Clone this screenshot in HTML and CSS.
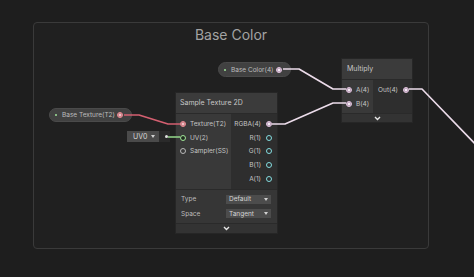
FILE: index.html
```html
<!DOCTYPE html>
<html>
<head>
<meta charset="utf-8">
<link rel="stylesheet" href="styles.css">
</head>
<body>
<div class="canvas">
  <div class="group"><div class="group-title">Base Color</div></div>

  <div class="prop prop-color">
    <span class="gdot"></span><span class="plabel">Base Color(4)</span><span class="port vec on"></span>
  </div>

  <div class="prop prop-tex">
    <span class="gdot"></span><span class="plabel">Base Texture(T2)</span><span class="port tex on"></span>
  </div>

  <div class="uvsel">
    <span class="dd">UV0<i class="tri"></i></span><span class="sdot"></span>
  </div>

  <div class="node sample">
    <div class="nhead">Sample Texture 2D</div>
    <div class="nbody">
      <div class="ins">
        <div class="row"><span class="port tex on"></span><span>Texture(T2)</span></div>
        <div class="row"><span class="port uv on"></span><span>UV(2)</span></div>
        <div class="row"><span class="port ss"></span><span>Sampler(SS)</span></div>
      </div>
      <div class="outs">
        <div class="row"><span>RGBA(4)</span><span class="port vec on"></span></div>
        <div class="row"><span>R(1)</span><span class="port f1"></span></div>
        <div class="row"><span>G(1)</span><span class="port f1"></span></div>
        <div class="row"><span>B(1)</span><span class="port f1"></span></div>
        <div class="row"><span>A(1)</span><span class="port f1"></span></div>
      </div>
    </div>
    <div class="nsettings">
      <div class="srow"><span>Type</span><span class="sdd">Default<i class="tri"></i></span></div>
      <div class="srow"><span>Space</span><span class="sdd">Tangent<i class="tri"></i></span></div>
    </div>
    <div class="ncollapse"><svg width="7" height="5" viewBox="0 0 7 5"><path d="M1 1 L3.5 3.5 L6 1" fill="none" stroke="#e6e6e6" stroke-width="1.4"/></svg></div>
  </div>

  <div class="node multiply">
    <div class="nhead">Multiply</div>
    <div class="nbody">
      <div class="ins">
        <div class="row"><span class="port vec on"></span><span>A(4)</span></div>
        <div class="row"><span class="port vec on"></span><span>B(4)</span></div>
      </div>
      <div class="outs">
        <div class="row"><span>Out(4)</span><span class="port vec on"></span></div>
      </div>
    </div>
    <div class="ncollapse"><svg width="7" height="5" viewBox="0 0 7 5"><path d="M1 1 L3.5 3.5 L6 1" fill="none" stroke="#e6e6e6" stroke-width="1.4"/></svg></div>
  </div>

  <svg class="edges" width="474" height="277" viewBox="0 0 474 277">
    <path d="M124 115 H139 L168 124 H180" stroke="#d45f70" />
    <path d="M283 69 H299 L333 89 H346" stroke="#ecdcea" />
    <path d="M272 124 H285 L333 103 H346" stroke="#ecdcea" />
    <path d="M409 89 H422 L482 151" stroke="#ecdcea" />
    <path d="M168 137 H180" stroke="#8fcf86" />
  </svg>
</div>
</body>
</html>
```

FILE: styles.css
```css
* { box-sizing: border-box; }
html, body {
  margin: 0;
  padding: 0;
  background: #1e1e1e;
}
body {
  font-family: Inter, "Noto Sans", "DejaVu Sans", sans-serif;
  color: #c4c4c4;
  font-size: 6.5px;
}
.canvas {
  position: relative;
  width: 474px;
  height: 277px;
  overflow: hidden;
  background: #1e1e1e;
}
.group {
  position: absolute;
  left: 33px;
  top: 22px;
  width: 396px;
  height: 227px;
  border: 1px solid #3a3a3a;
  border-radius: 4px;
  background: #202020;
}
.group-title {
  padding-top: 4px;
  line-height: 16px;
  font-size: 14px;
  text-align: center;
  color: #a3a3a3;
}

/* property pills */
.prop {
  position: absolute;
  display: flex;
  align-items: center;
  height: 15px;
  border-radius: 8px;
  background: #414141;
  border: 1px solid #4a4a4a;
  padding-left: 5px;
  color: #bdbdbd;
}
.prop-color { left: 218px; top: 62px; width: 73px; }
.prop-tex { left: 49px; top: 108px; width: 83px; height: 14px; }
.gdot {
  width: 2px;
  height: 2px;
  border-radius: 50%;
  background: #9fe39a;
  margin-right: 5px;
}
.plabel { flex: 1; white-space: nowrap; }
.prop .port { margin-right: 8px; }

/* uv selector */
.uvsel {
  position: absolute;
  left: 127px;
  top: 131px;
  width: 43px;
  height: 11px;
  display: flex;
  align-items: center;
  background: #2a2a2a;
}
.dd {
  display: flex;
  align-items: center;
  justify-content: space-between;
  width: 32px;
  height: 11px;
  padding: 0 4px 0 6px;
  background: #4a4a4a;
  color: #d6d6d6;
  font-size: 7px;
}
.sdot {
  width: 3px;
  height: 3px;
  margin-left: 6px;
  background: #e0e0e0;
  border-radius: 50%;
}
.tri {
  width: 0;
  height: 0;
  border-left: 2.5px solid transparent;
  border-right: 2.5px solid transparent;
  border-top: 3px solid #d0d0d0;
}

/* ports */
.port {
  width: 6px;
  height: 6px;
  border-radius: 50%;
  flex: none;
  border: 1px solid #aaa;
}
.port.vec { border-color: #e9cbe6; }
.port.vec.on { background: radial-gradient(circle, #f6eaf5 0 1.3px, #8f7390 1.8px); }
.port.tex { border-color: #f08e96; }
.port.tex.on { background: radial-gradient(circle, #f2c0c4 0 1.3px, #a45a62 1.8px); }
.port.uv { border-color: #9ee394; }
.port.uv.on { background: radial-gradient(circle, #1f2a1f 0 1.3px, #2a352a 1.8px); }
.port.ss { border-color: #b8b8b8; }
.port.f1 { border-color: #84dde0; }

/* nodes */
.node {
  position: absolute;
  background: #2e2e2e;
  box-shadow: 0 0 0 1px #262626;
}
.sample { left: 176px; top: 93px; width: 101px; }
.multiply { left: 342px; top: 59px; width: 70px; }
.nhead {
  height: 21px;
  line-height: 20px;
  padding-left: 4px;
  background: #3b3b3b;
  border-bottom: 1px solid #2a2a2a;
  color: #c8c8c8;
  font-size: 7px;
  white-space: nowrap;
}
.multiply .nhead { padding-left: 5px; }
.nbody {
  display: flex;
}
.ins {
  background: #393939;
  padding: 3px 0 3px 4px;
}
.sample .ins { width: 55px; }
.multiply .ins { width: 31px; }
.outs {
  flex: 1;
  background: #2e2e2e;
  padding: 3px 5px 3px 0;
}
.multiply .outs { padding-right: 3px; }
.row {
  height: 13.75px;
  display: flex;
  align-items: center;
  gap: 4px;
  white-space: nowrap;
}
.multiply .row { height: 14px; }
.outs .row { justify-content: flex-end; gap: 5px; }
.sample .nbody { height: 75px; }
.multiply .nbody { height: 33px; }

.nsettings {
  background: #363636;
  border-top: 1px solid #2a2a2a;
  padding: 2px 6px 3px 5px;
  height: 34px;
}
.srow {
  display: flex;
  align-items: center;
  justify-content: space-between;
  height: 14.5px;
  color: #bdbdbd;
}
.sdd {
  display: flex;
  align-items: center;
  justify-content: space-between;
  width: 45px;
  height: 9px;
  padding: 0 3px 0 3px;
  background: #4c4c4c;
  color: #d4d4d4;
  font-size: 6.5px;
}
.ncollapse {
  display: flex;
  align-items: center;
  justify-content: center;
  height: 10px;
  background: #333333;
  border-top: 1px solid #2a2a2a;
}
.multiply .ncollapse { height: 9px; }

.edges {
  position: absolute;
  left: 0;
  top: 0;
  pointer-events: none;
}
.edges path {
  fill: none;
  stroke-width: 1.6;
  stroke-linejoin: round;
}
```
